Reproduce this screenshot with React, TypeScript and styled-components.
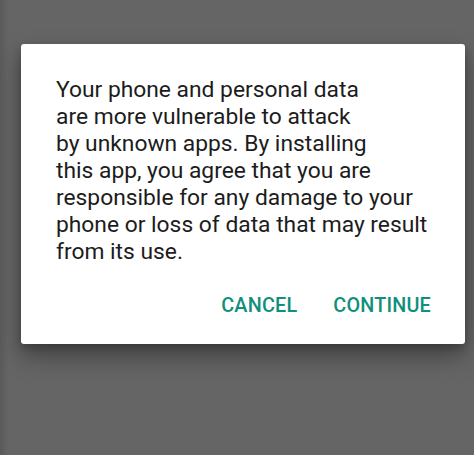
import React from 'react';
import styled, { createGlobalStyle } from 'styled-components';

const GlobalStyle = createGlobalStyle`
  html, body {
    margin: 0;
    padding: 0;
    background: #656565;
  }
  body {
    font-family: Roboto, "Noto Sans", sans-serif;
  }
`;

const Screen = styled.div`
  width: 474px;
  height: 455px;
  box-sizing: border-box;
  padding: 44px 9px 0 21px;
  background: linear-gradient(to right, #5a5a5a 0px, #656565 8px);
`;

const Dialog = styled.div`
  width: 444px;
  height: 300px;
  box-sizing: border-box;
  background: #ffffff;
  border-radius: 3px;
  box-shadow: 0 12px 24px rgba(0, 0, 0, 0.35), 0 4px 8px rgba(0, 0, 0, 0.2);
  padding: 32px 20px 0 35px;
  display: flex;
  flex-direction: column;
`;

const Message = styled.p`
  margin: 0;
  font-size: 22.8px;
  line-height: 27px;
  color: #1c1c1c;
  white-space: pre-line;
`;

const Actions = styled.div`
  display: flex;
  justify-content: flex-end;
  gap: 36px;
  margin-top: 29px;
  padding-right: 14px;
`;

const TextButton = styled.button`
  border: none;
  background: none;
  padding: 0;
  font-family: Roboto, sans-serif;
  font-weight: 500;
  font-size: 19.8px;
  line-height: 23px;
  letter-spacing: 0.2px;
  color: #0f8f7c;
  text-transform: uppercase;
  cursor: pointer;
`;

const text = `Your phone and personal data
are more vulnerable to attack
by unknown apps. By installing
this app, you agree that you are
responsible for any damage to your
phone or loss of data that may result
from its use.`;

export default function App() {
  return (
    <>
      <GlobalStyle />
      <Screen>
        <Dialog>
          <Message>{text}</Message>
          <Actions>
            <TextButton>Cancel</TextButton>
            <TextButton>Continue</TextButton>
          </Actions>
        </Dialog>
      </Screen>
    </>
  );
}
